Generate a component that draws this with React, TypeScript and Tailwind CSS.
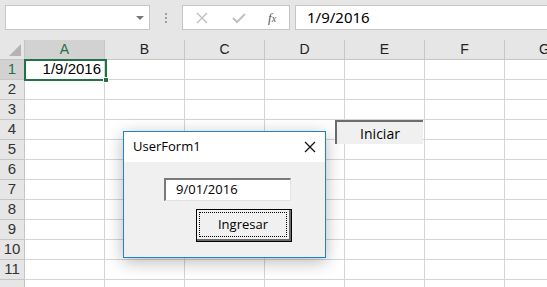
import React from 'react';

const cols = ['A', 'B', 'C', 'D', 'E', 'F', 'G'];
const rows = [1, 2, 3, 4, 5, 6, 7, 8, 9, 10, 11, 12];

function FormulaBar() {
  return (
    <div className="h-[40px] bg-[#e6e6e6] flex items-start pt-[5px] pl-[5px]">
      {/* name box */}
      <div className="w-[145px] h-[25px] bg-white border border-[#c6c6c6] flex items-center justify-end pr-[5px]">
        <div className="w-0 h-0 border-l-[4px] border-r-[4px] border-t-[4px] border-l-transparent border-r-transparent border-t-[#777]" />
      </div>
      <div className="w-[32px] h-[25px] flex flex-col items-center justify-center gap-[2px]">
        <div className="w-[2px] h-[2px] bg-[#a0a0a0]" />
        <div className="w-[2px] h-[2px] bg-[#a0a0a0]" />
        <div className="w-[2px] h-[2px] bg-[#a0a0a0]" />
      </div>
      <div className="w-[108px] h-[25px] bg-white border border-[#c6c6c6] flex items-center">
        <svg width="12" height="12" viewBox="0 0 12 12" className="ml-[13px]">
          <path d="M1 1 L11 11 M11 1 L1 11" stroke="#c0c0c0" strokeWidth="1.4" />
        </svg>
        <svg width="14" height="12" viewBox="0 0 14 12" className="ml-[24px]">
          <path d="M1 6 L5 10 L13 2" stroke="#c0c0c0" strokeWidth="2" fill="none" />
        </svg>
        <span className="ml-[22px] text-[13px] italic text-[#555]" style={{ fontFamily: '"Liberation Serif", serif' }}>
          f<span className="text-[10px]">x</span>
        </span>
      </div>
      <div className="ml-[5px] flex-1 h-[25px] bg-white border border-[#c6c6c6] border-r-0 flex items-center pl-[11px] text-[15px] text-black">
        1/9/2016
      </div>
    </div>
  );
}

function Sheet() {
  return (
    <div className="relative" style={{ fontFamily: '"Liberation Sans", Arial, sans-serif' }}>
      {/* header row */}
      <div className="flex h-[20px] bg-[#e6e6e6]">
        <div className="w-[25px] shrink-0 border-r border-b border-[#c6c6c6] relative overflow-hidden">
          <div className="absolute right-[3px] bottom-[3px] w-0 h-0" style={{ borderBottom: '12px solid #b4b4b4', borderLeft: '12px solid transparent' }} />
        </div>
        {cols.map((c) => (
          <div
            key={c}
            className={
              'w-[80px] shrink-0 flex items-center justify-center text-[14px] border-r border-[#c6c6c6] ' +
              (c === 'A'
                ? 'bg-[#d2d2d2] text-[#217346] border-b border-b-[#217346]'
                : 'text-[#222] border-b border-b-[#c6c6c6]')
            }
          >
            {c}
          </div>
        ))}
      </div>
      {rows.map((r) => (
        <div key={r} className="flex h-[20px]">
          <div
            className={
              'w-[25px] shrink-0 flex items-center justify-center text-[15px] border-b border-r border-[#c6c6c6] ' +
              (r === 1 ? 'bg-[#d2d2d2] text-[#217346]' : 'bg-[#e6e6e6] text-[#333]')
            }
          >
            {r < 12 ? r : ''}
          </div>
          {cols.map((c) => (
            <div key={c} className="w-[80px] shrink-0 bg-white border-r border-b border-[#d4d4d4] flex items-center justify-end pr-[3px] text-[15px] text-black">
              {r === 1 && c === 'A' ? '1/9/2016' : ''}
            </div>
          ))}
        </div>
      ))}

      {/* active cell A1 */}
      <div className="absolute left-[24px] top-[19px] w-[83px] h-[22px] border-2 border-[#217346] pointer-events-none" />
      <div className="absolute left-[103px] top-[37px] w-[6px] h-[6px] bg-[#217346] border border-white" />

      {/* Iniciar button on sheet */}
      <div
        className="absolute left-[335px] top-[80px] w-[88px] h-[24px] bg-[#f0f0f0] border-t-2 border-l-2 border-[#6d6d6d] flex items-center justify-center text-[14px] text-black"
        style={{ fontFamily: '"Open Sans", "Noto Sans", sans-serif' }}
      >
        Iniciar
      </div>

      {/* UserForm dialog */}
      <div
        className="absolute left-[123px] top-[91px] w-[203px] h-[127px] bg-[#f0f0f0] border border-[#1883d7] shadow-[0_4px_16px_rgba(0,0,0,0.28)] flex flex-col"
        style={{ fontFamily: '"Open Sans", "Noto Sans", sans-serif' }}
      >
        <div className="h-[30px] bg-white flex items-center justify-between pl-[9px] pr-[9px]">
          <span className="text-[13px] text-black">UserForm1</span>
          <svg width="12" height="12" viewBox="0 0 12 12">
            <path d="M1 1 L11 11 M11 1 L1 11" stroke="#111" strokeWidth="1.2" />
          </svg>
        </div>
        <div className="flex-1 flex flex-col items-start pl-[40px] pt-[16px]">
          <div className="w-[127px] h-[23px] bg-white border-t-2 border-l-2 border-t-[#7a7a7a] border-l-[#7a7a7a] border-b border-r border-b-[#e3e3e3] border-r-[#e3e3e3] flex items-center pl-[10px] text-[13px] text-black">
            9/01/2016
          </div>
          <div className="ml-[32px] mt-[8px] w-[96px] h-[33px] border border-black bg-white">
            <div className="w-full h-full border-r-2 border-b-2 border-[#6d6d6d] bg-[#f0f0f0] p-[2px]">
              <div className="w-full h-full border border-dotted border-black flex items-center justify-center text-[13px] text-black">
                Ingresar
              </div>
            </div>
          </div>
        </div>
      </div>
    </div>
  );
}

export default function App() {
  return (
    <div className="w-[547px] h-[287px] overflow-hidden bg-white">
      <FormulaBar />
      <Sheet />
    </div>
  );
}
